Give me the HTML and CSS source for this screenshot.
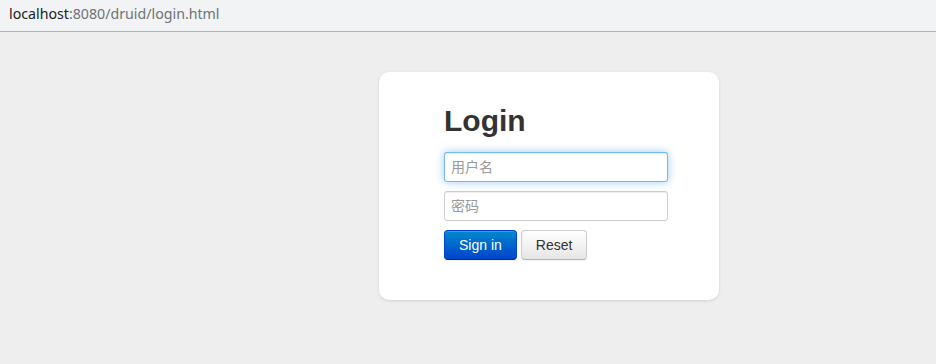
FILE: index.html
```html
<!DOCTYPE html>
<html lang="en">
<head>
    <meta charset="UTF-8">
    <meta name="viewport" content="width=device-width, initial-scale=1.0">
    <title>druid monitor login</title>
    <link rel="stylesheet" href="styles.css">
</head>
<body>
    <div class="address-bar">
        <span class="host">localhost</span><span class="path">:8080/druid/login.html</span>
    </div>

    <div class="page">
        <div class="login-box">
            <h1>Login</h1>
            <form class="login-form" onsubmit="return false;">
                <input type="text" class="field focused" placeholder="用户名" autofocus><br>
                <input type="password" class="field" placeholder="密码"><br>
                <div class="actions">
                    <button type="submit" class="btn btn-primary">Sign in</button>
                    <button type="reset" class="btn">Reset</button>
                </div>
            </form>
        </div>
    </div>
</body>
</html>
```

FILE: styles.css
```css
html, body {
    margin: 0;
    padding: 0;
}

body {
    font-family: "Liberation Sans", Arial, sans-serif;
    font-size: 14px;
    color: #333;
    background-color: #eeeeee;
    height: 364px;
    overflow: hidden;
}

.address-bar {
    background-color: #f1f3f4;
    border-bottom: 1px solid #b4b4b4;
    box-sizing: border-box;
    height: 32px;
    padding-left: 9px;
    font-family: "Noto Sans", "Open Sans", sans-serif;
    font-size: 14.2px;
    line-height: 27px;
}

.host {
    color: #202124;
}

.path {
    color: #6f7276;
}

.page {
    padding: 40px 0 0 379px;
}

.login-box {
    width: 340px;
    height: 228px;
    box-sizing: border-box;
    background-color: #fff;
    border-radius: 10px;
    box-shadow: 0 1px 3px rgba(0, 0, 0, 0.12);
    padding: 31px 0 0 65px;
}

h1 {
    margin: 0 0 13px;
    font-size: 30px;
    line-height: 36px;
    font-weight: bold;
    color: #333;
}

.field {
    width: 224px;
    height: 30px;
    box-sizing: border-box;
    margin: 0 0 9px;
    padding: 4px 6px;
    font-family: "Liberation Sans", "Noto Sans CJK SC", sans-serif;
    font-size: 14px;
    color: #555;
    border: 1px solid #ccc;
    border-radius: 3px;
    box-shadow: inset 0 1px 1px rgba(0, 0, 0, 0.075);
    outline: none;
}

.field::placeholder {
    color: #999;
}

.field.focused {
    border-color: rgba(82, 168, 236, 0.8);
    box-shadow: inset 0 1px 1px rgba(0, 0, 0, 0.075), 0 0 8px rgba(82, 168, 236, 0.6);
}

.actions {
    display: flex;
    gap: 4px;
}

.btn {
    height: 30px;
    padding: 4px 14px;
    font-family: "Liberation Sans", Arial, sans-serif;
    font-size: 14px;
    line-height: 20px;
    color: #333;
    background-color: #f5f5f5;
    background-image: linear-gradient(to bottom, #ffffff, #e6e6e6);
    border: 1px solid #ccc;
    border-bottom-color: #b3b3b3;
    border-radius: 4px;
    box-shadow: inset 0 1px 0 rgba(255, 255, 255, 0.2), 0 1px 2px rgba(0, 0, 0, 0.05);
    cursor: pointer;
}

.btn-primary {
    color: #fff;
    background-color: #006dcc;
    background-image: linear-gradient(to bottom, #0088cc, #0044cc);
    border-color: #0044cc #0044cc #002a80;
}
```
